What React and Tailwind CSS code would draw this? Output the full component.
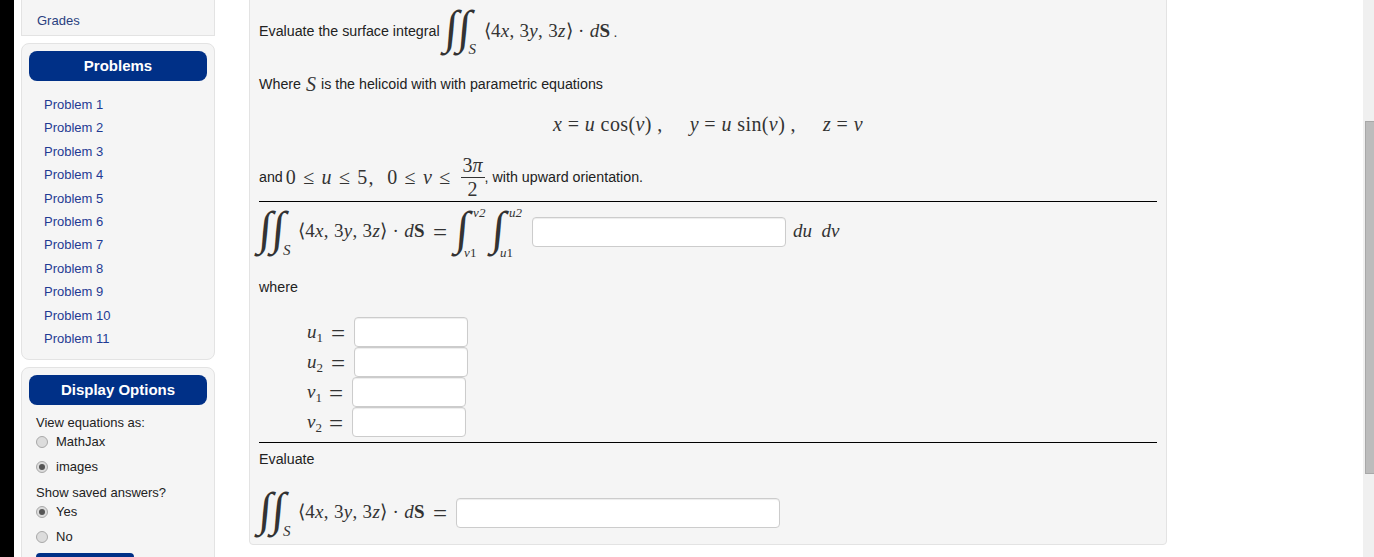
import React from 'react';

const problems = ['Problem 1', 'Problem 2', 'Problem 3', 'Problem 4', 'Problem 5', 'Problem 6', 'Problem 7', 'Problem 8', 'Problem 9', 'Problem 10', 'Problem 11'];

const Radio = ({ checked, label, className }) => (
  <div className={`flex items-center h-[25px] ${className || ''}`}>
    <span className="w-[12px] h-[12px] rounded-full border border-[#a9a9a9] bg-[#dcdcdc] flex items-center justify-center mr-[8px]">
      {checked && <span className="w-[6px] h-[6px] rounded-full bg-[#555]"></span>}
    </span>
    <span>{label}</span>
  </div>
);

const I = ({ children }) => <i className="italic">{children}</i>;

const Sub = ({ children }) => <span className="text-[13px] not-italic relative top-[4px]">{children}</span>;

const Eq = ({ className }) => <span className={`text-[25px] leading-none relative top-[1px] ${className || ''}`}>=</span>;

const Sign = ({ className }) => (
  <span className={`absolute top-[-4px] text-[47px] leading-[47px] font-['Liberation_Serif'] -skew-x-[5deg] ${className}`}>∫</span>
);

// double integral over S
const SurfaceIntegral = () => (
  <span className="relative inline-block h-[46px] w-[39px] shrink-0">
    <Sign className="left-0" />
    <Sign className="left-[13px]" />
    <i className="absolute left-[24px] bottom-[-3px] text-[15px] leading-none italic">S</i>
  </span>
);

const VectorField = () => (
  <span className="w-[130px] shrink-0 text-[19px] tracking-[0.3px] whitespace-nowrap">
    ⟨4<I>x</I>, 3<I>y</I>, 3<I>z</I>⟩ · <I>d</I><b className="font-bold">S</b>
  </span>
);

const BoundIntegral = ({ upper, lower, className }) => (
  <span className={`relative inline-block h-[46px] shrink-0 ${className}`}>
    <Sign className="left-0" />
    <i className="absolute left-[17px] top-[-3px] text-[13px] leading-none italic">{upper}</i>
    <i className="absolute left-[8px] bottom-[-4px] text-[13px] leading-none italic">{lower}</i>
  </span>
);

const Field = ({ className }) => (
  <input className={`h-[30px] bg-white border border-[#ccc] rounded-[4px] shadow-[inset_0_1px_1px_rgba(0,0,0,0.075)] shrink-0 ${className || ''}`} />
);

const Bound = ({ name, idx, width }) => (
  <div className="flex items-center h-[30px] pl-[48px]">
    <span className={`flex justify-between items-center mr-[9px] font-['Liberation_Serif'] text-[19px] text-[#333] whitespace-nowrap ${width}`}>
      <span><I>{name}</I><Sub>{idx}</Sub></span>
      <Eq />
    </span>
    <Field className="w-[114px]" />
  </div>
);

export default function App() {
  return (
    <div className="flex h-screen overflow-hidden bg-white font-['Liberation_Sans',sans-serif] text-[14.25px] text-[#222]">
      <div className="w-[14px] bg-black shrink-0"></div>

      {/* sidebar */}
      <aside className="w-[194px] ml-[7px] shrink-0 flex flex-col gap-[7px] -mt-[10px] text-[13px]">
        <div className="h-[46px] shrink-0 bg-[#f5f5f5] border border-[#e3e3e3] pl-[15px] pt-[21px] text-[#2a3f7f] leading-[18px]">Grades</div>

        <div className="h-[317px] shrink-0 bg-[#f5f5f5] border border-[#e3e3e3] rounded-[8px] px-[7px] pt-[7px]">
          <div className="h-[30px] bg-[#003087] rounded-[8px] text-white font-bold text-[15px] flex items-center justify-center">Problems</div>
          <ul className="mt-[12px] pl-[15px] text-[#1f3a93]">
            {problems.map((p) => (
              <li key={p} className="h-[23.4px] leading-[23.4px]">{p}</li>
            ))}
          </ul>
        </div>

        <div className="h-[300px] shrink-0 bg-[#f5f5f5] border border-[#e3e3e3] rounded-[8px] px-[7px] pt-[7px]">
          <div className="h-[30px] bg-[#003087] rounded-[8px] text-white font-bold text-[15px] flex items-center justify-center">Display Options</div>
          <div className="pl-[7px] text-[#222]">
            <div className="mt-[9px] leading-[18px]">View equations as:</div>
            <Radio label="MathJax" className="-mt-[3px]" />
            <Radio checked label="images" />
            <div className="leading-[18px] mt-[5px]">Show saved answers?</div>
            <Radio checked label="Yes" className="-mt-[3px]" />
            <Radio label="No" />
            <div className="w-[98px] h-[30px] bg-[#003087] rounded-[4px] mt-[4px]"></div>
          </div>
        </div>
      </aside>

      {/* problem well */}
      <main className="w-[918px] ml-[34px] h-[550px] -mt-[5px] shrink-0 bg-[#f5f5f5] border border-[#e3e3e3] rounded-[4px] pl-[9px] pr-[9px] pt-[4px]">
        <div className="h-[62px] flex items-center">
          <span className="mt-[2px]">Evaluate the surface integral</span>
          <span className="ml-[5px] flex items-center font-['Liberation_Serif'] text-[#333]">
            <SurfaceIntegral />
            <VectorField />
            <span className="font-['Liberation_Sans'] text-[14px] mt-[2px]">.</span>
          </span>
        </div>

        <div className="h-[44px] flex items-center">
          <span className="mt-[2px]">Where</span>
          <i className="font-['Liberation_Serif'] text-[20px] italic text-[#333] mx-[5px]">S</i>
          <span className="mt-[2px]">is the helicoid with with parametric equations</span>
        </div>

        <div className="h-[36px] flex items-center justify-center font-['Liberation_Serif'] text-[20px] tracking-[0.4px] text-[#333] whitespace-pre">
          <I>x</I> = <I>u</I> cos(<I>v</I>) ,<span className="w-[27px]"></span><I>y</I> = <I>u</I> sin(<I>v</I>) ,<span className="w-[27px]"></span><I>z</I> = <I>v</I>
        </div>

        <div className="h-[59px] flex items-center pt-[10px]">
          <span className="mt-[2px]">and</span>
          <span className="ml-[3px] font-['Liberation_Serif'] text-[20px] tracking-[1.2px] text-[#333] whitespace-pre">0 ≤ <I>u</I> ≤ 5,  0 ≤ <I>v</I> ≤ </span>
          <span className="inline-flex flex-col items-center font-['Liberation_Serif'] text-[20px] text-[#333] leading-[22px] ml-[3px]">
            <span className="px-[2px] border-b border-[#333] pb-[1px]">3<I>π</I></span>
            <span>2</span>
          </span>
          <span className="mt-[2px]">, with upward orientation.</span>
        </div>

        <hr className="border-0 border-t border-black" />

        <div className="h-[55px] flex items-center pt-[4px] font-['Liberation_Serif'] text-[#333]">
          <SurfaceIntegral />
          <VectorField />
          <Eq className="ml-[5px] mr-[9px]" />
          <BoundIntegral upper="v2" lower={<>v<span className="not-italic">1</span></>} className="w-[36px]" />
          <BoundIntegral upper="u2" lower={<>u<span className="not-italic">1</span></>} className="w-[40px]" />
          <Field className="w-[254px]" />
          <span className="ml-[7px] text-[19px] whitespace-pre"><I>du</I>  <I>dv</I></span>
        </div>

        <div className="h-[60px] flex items-center"><span className="mt-[1px]">where</span></div>

        <Bound name="u" idx="1" width="w-[38px]" />
        <Bound name="u" idx="2" width="w-[38px]" />
        <Bound name="v" idx="1" width="w-[36px]" />
        <Bound name="v" idx="2" width="w-[36px]" />

        <hr className="border-0 border-t border-black mt-[5px]" />

        <div className="h-[33px] flex items-center">Evaluate</div>

        <div className="h-[55px] mt-[9px] flex items-center font-['Liberation_Serif'] text-[#333]">
          <SurfaceIntegral />
          <VectorField />
          <Eq className="ml-[5px] mr-[9px]" />
          <Field className="w-[324px]" />
        </div>
      </main>

      {/* page scrollbar */}
      <div className="ml-auto w-[11px] bg-[#f0f0f0] shrink-0 pt-[121px] pl-[2px]">
        <div className="h-[353px] bg-[#bcbcbc] border border-[#a8a8a8] border-r-0"></div>
      </div>
    </div>
  );
}
